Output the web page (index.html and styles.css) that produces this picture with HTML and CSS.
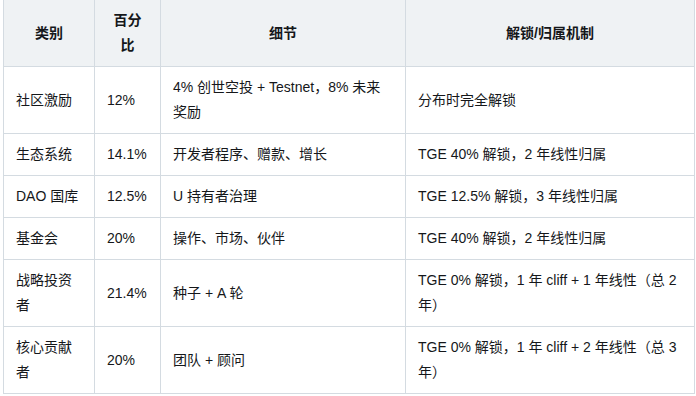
FILE: index.html
```html
<!DOCTYPE html>
<html lang="zh-CN">
<head>
<meta charset="utf-8">
<link rel="stylesheet" href="styles.css">
</head>
<body>
<table class="alloc">
  <colgroup>
    <col class="c1"><col class="c2"><col class="c3"><col class="c4">
  </colgroup>
  <thead>
    <tr><th>类别</th><th>百分比</th><th>细节</th><th>解锁/归属机制</th></tr>
  </thead>
  <tbody>
    <tr><td>社区激励</td><td>12%</td><td>4% 创世空投 + Testnet，8% 未来奖励</td><td>分布时完全解锁</td></tr>
    <tr><td>生态系统</td><td>14.1%</td><td>开发者程序、赠款、增长</td><td>TGE 40% 解锁，2 年线性归属</td></tr>
    <tr><td>DAO 国库</td><td>12.5%</td><td>U 持有者治理</td><td>TGE 12.5% 解锁，3 年线性归属</td></tr>
    <tr><td>基金会</td><td>20%</td><td>操作、市场、伙伴</td><td>TGE 40% 解锁，2 年线性归属</td></tr>
    <tr><td>战略投资者</td><td>21.4%</td><td>种子 + A 轮</td><td>TGE 0% 解锁，1 年 cliff + 1 年线性（总 2 年）</td></tr>
    <tr><td>核心贡献者</td><td>20%</td><td>团队 + 顾问</td><td>TGE 0% 解锁，1 年 cliff + 2 年线性（总 3 年）</td></tr>
  </tbody>
</table>
</body>
</html>
```
FILE: styles.css
```css
html, body {
  margin: 0;
  padding: 0;
  background: #ffffff;
}
body {
  padding: 0 0 0 3px;
  margin-top: -1px;
  font-family: "Liberation Sans", "Noto Sans CJK SC", sans-serif;
  font-size: 14px;
  color: #15171a;
}
.alloc {
  border-collapse: collapse;
  table-layout: fixed;
  width: 691px;
}
.c1 { width: 91px; }
.c2 { width: 66px; }
.c3 { width: 245px; }
.c4 { width: 289px; }
.alloc th,
.alloc td {
  border: 1px solid #d4dbe1;
  padding: 8px 12px;
  line-height: 25px;
  vertical-align: middle;
  text-align: left;
}
.alloc th {
  background: #eff2f4;
  font-weight: bold;
  text-align: center;
}
```
